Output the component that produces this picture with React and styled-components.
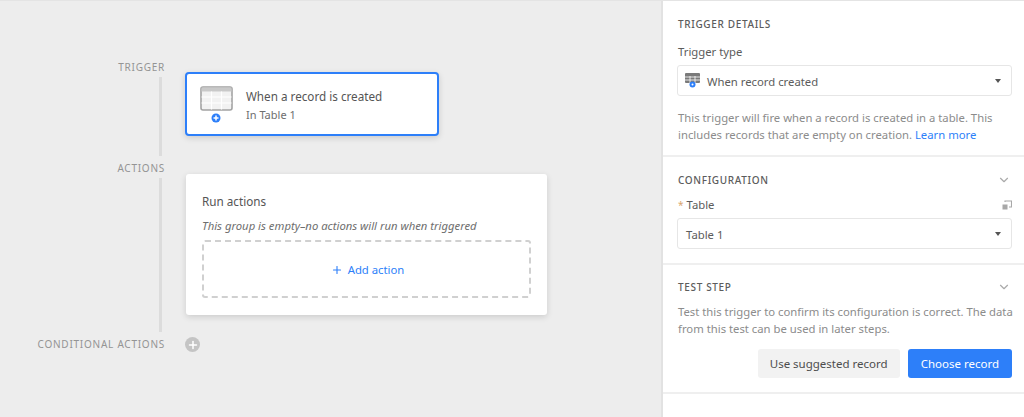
import styled, { createGlobalStyle } from "styled-components";
import { ChevronDown, Plus } from "lucide-react";

const Global = createGlobalStyle`
    html, body { margin: 0; padding: 0; height: 100%; }
    body { font-family: "Noto Sans", "Open Sans", sans-serif; background: #fff; overflow: hidden; }
    * { box-sizing: border-box; }
`

const Page = styled.div`
    width: 1024px;
    height: 417px;
    display: flex;
    border-top: 1px solid #e4e4e4;
`

const Canvas = styled.div`
    width: 663px;
    height: 100%;
    background-color: #ededed;
    padding-top: 60px;
    border-right: 2px solid #e2e2e2;
`

const Stage = styled.div`
    display: grid;
    grid-template-columns: 165px 1fr;
    column-gap: 20px;
    align-items: stretch;
    height: ${p => p.$h}px;
`

const Rail = styled.div`
    display: flex;
    flex-direction: column;
    align-items: flex-end;
`

const StageLabel = styled.div`
    font-size: 10px;
    line-height: 13px;
    letter-spacing: .75px;
    color: #949494;
    white-space: nowrap;
`

const Spine = styled.div`
    width: 3px;
    flex: 1;
    margin: 3px 3px 6px 0;
    background-color: #dcdcdc;
`

const TriggerCard = styled.div`
    margin-top: 11px;
    width: 254px;
    height: 64px;
    background: #fff;
    border: 2px solid #2d7ff9;
    border-radius: 4px;
    box-shadow: 0 2px 6px rgba(0,0,0,.14);
    display: flex;
    align-items: center;
    padding-left: 13px;
    gap: 12px;
`

const CardText = styled.div`
    display: flex;
    flex-direction: column;
    gap: 3px;
    margin-top: 2px;
`

const CardTitle = styled.div`
    font-size: 11.7px;
    line-height: 16px;
    color: #555;
`

const CardSub = styled.div`
    font-size: 11px;
    line-height: 16px;
    color: #6e6e6e;
`

const ActionsCard = styled.div`
    margin: 12px 0 0 1px;
    width: 361px;
    height: 141px;
    background: #fff;
    border-radius: 3px;
    box-shadow: 0 2px 6px rgba(0,0,0,.14);
    padding: 19px 16px 0;
`

const Hint = styled.div`
    margin-top: 9px;
    font-size: 11.3px;
    line-height: 15px;
    font-style: italic;
    color: #6e6e6e;
`

const AddAction = styled.div`
    margin-top: 7px;
    height: 58px;
    border: 2px dashed #d0d0d0;
    border-radius: 3px;
    display: flex;
    align-items: center;
    justify-content: center;
    gap: 5px;
    font-size: 11.3px;
    color: #2d7ff9;
    padding: 1px 0 0 2px;
`

const RoundAdd = styled.div`
    margin-top: -1px;
    width: 15px;
    height: 15px;
    border-radius: 50%;
    background: #c4c4c4;
    display: flex;
    align-items: center;
    justify-content: center;
`

const Panel = styled.div`
    width: 361px;
    height: 100%;
`

const Section = styled.section`
    height: ${p => p.$h}px;
    border-bottom: 2px solid #efefef;
    padding: ${p => p.$top}px 12px 0 15px;
`

const HeadRow = styled.div`
    display: flex;
    align-items: center;
    justify-content: space-between;
    height: 14px;
    svg { margin-right: 1px; }
`

const Heading = styled.h2`
    margin: 0;
    font-size: 10px;
    line-height: 14px;
    font-weight: 500;
    letter-spacing: .65px;
    color: #5c5c5c;
`

const FieldLabel = styled.div`
    font-size: 11.3px;
    line-height: 16px;
    color: #5c5c5c;
    display: flex;
    justify-content: space-between;
    align-items: center;
    margin-top: ${p => p.$top}px;
`

const Star = styled.span`
    color: #d9a66e;
    font-size: 10px;
    margin-right: 3px;
`

const Select = styled.div`
    height: 31px;
    margin: ${p => p.$top}px 0 0 -1px;
    border: 1px solid #e6e6e6;
    border-radius: 3px;
    display: flex;
    align-items: center;
    padding: 1px 9px 0 8px;
    font-size: 11.3px;
    color: #5c5c5c;
    gap: 7px;
`

const SelectText = styled.span`
    flex: 1;
`

const Caret = styled.span`
    width: 0;
    height: 0;
    border-left: 3.5px solid transparent;
    border-right: 3.5px solid transparent;
    border-top: 4.5px solid #555;
    margin: -1px 1px 0 0;
`

const Help = styled.p`
    margin: ${p => p.$top}px -4px 0 0;
    font-size: 11.3px;
    line-height: 16.5px;
    color: #8c8c8c;
`

const Link = styled.a`
    color: #2d7ff9;
`

const Buttons = styled.div`
    display: flex;
    justify-content: flex-end;
    gap: 8px;
    margin-top: 12px;
`

const Button = styled.button`
    height: 29px;
    border: 0;
    border-radius: 3px;
    font: inherit;
    font-size: 11.5px;
    padding: 0 ${p => p.$primary ? 13 : 12}px;
    color: ${p => p.$primary ? "#fff" : "#4d4d4d"};
    background-color: ${p => p.$primary ? "#2d7ff9" : "#f2f2f2"};
`

const SmallIconSvg = styled.svg`
    margin: -3px 0 0 -1px;
`

const TableIcon = () => (
    <svg width="34" height="37" viewBox="0 0 34 37">
        <rect x="1" y="1" width="31" height="23" rx="2" fill="#f2f2f2" stroke="#a3a3a3" strokeWidth="1.6" />
        <rect x="1.5" y="1.5" width="30" height="4" fill="#c9c9c9" />
        <path d="M1.5 11h30M1.5 17h30M11.5 5.5v18M21.5 5.5v18" stroke="#fff" strokeWidth="1.2" />
        <circle cx="16" cy="32" r="4.5" fill="#2d7ff9" />
        <path d="M13.5 32h5M16 29.5v5" stroke="#fff" strokeWidth="1.5" />
    </svg>
)

const SmallTableIcon = () => (
    <SmallIconSvg width="15" height="16" viewBox="0 0 15 16">
        <rect x="0" y="1" width="15" height="10" rx="1" fill="#7a7a7a" />
        <path d="M0 5h15M5 4v7M10 4v7M0 8h15" stroke="#fff" strokeWidth=".8" />
        <circle cx="7.5" cy="12.5" r="3" fill="#2d7ff9" />
        <circle cx="7.5" cy="12.5" r="1" fill="#fff" />
    </SmallIconSvg>
)

const SwapIcon = () => (
    <svg width="10" height="10" viewBox="0 0 10 10">
        <rect x="0.5" y="4.5" width="5" height="5" fill="#a8a8a8" />
        <path d="M3 2V1h6.5v6H7" fill="none" stroke="#a8a8a8" strokeWidth="1.1" />
    </svg>
)

const App = () => {
    return (
        <>
            <Global />
            <Page>
                <Canvas>
                    <Stage $h={101}>
                        <Rail>
                            <StageLabel>TRIGGER</StageLabel>
                            <Spine />
                        </Rail>
                        <TriggerCard>
                            <TableIcon />
                            <CardText>
                                <CardTitle>When a record is created</CardTitle>
                                <CardSub>In Table 1</CardSub>
                            </CardText>
                        </TriggerCard>
                    </Stage>
                    <Stage $h={176}>
                        <Rail>
                            <StageLabel>ACTIONS</StageLabel>
                            <Spine />
                        </Rail>
                        <ActionsCard>
                            <CardTitle>Run actions</CardTitle>
                            <Hint>This group is empty–no actions will run when triggered</Hint>
                            <AddAction>
                                <Plus size={12} strokeWidth={2.2} />
                                Add action
                            </AddAction>
                        </ActionsCard>
                    </Stage>
                    <Stage $h={20}>
                        <Rail>
                            <StageLabel>CONDITIONAL ACTIONS</StageLabel>
                        </Rail>
                        <RoundAdd>
                            <Plus size={12} color="#fff" strokeWidth={3} />
                        </RoundAdd>
                    </Stage>
                </Canvas>
                <Panel>
                    <Section $h={156} $top={16}>
                        <Heading>TRIGGER DETAILS</Heading>
                        <FieldLabel $top={13}>Trigger type</FieldLabel>
                        <Select $top={5}>
                            <SmallTableIcon />
                            <SelectText>When record created</SelectText>
                            <Caret />
                        </Select>
                        <Help $top={14}>
                            This trigger will fire when a record is created in a table. This includes records that are empty on creation. <Link>Learn more</Link>
                        </Help>
                    </Section>
                    <Section $h={108} $top={16}>
                        <HeadRow>
                            <Heading>CONFIGURATION</Heading>
                            <ChevronDown size={14} color="#aaa" />
                        </HeadRow>
                        <FieldLabel $top={10}>
                            <span><Star>*</Star>Table</span>
                            <SwapIcon />
                        </FieldLabel>
                        <Select $top={5}>
                            <SelectText>Table 1</SelectText>
                            <Caret />
                        </Select>
                    </Section>
                    <Section $h={129} $top={15}>
                        <HeadRow>
                            <Heading>TEST STEP</Heading>
                            <ChevronDown size={14} color="#aaa" />
                        </HeadRow>
                        <Help $top={10}>
                            Test this trigger to confirm its configuration is correct. The data from this test can be used in later steps.
                        </Help>
                        <Buttons>
                            <Button>Use suggested record</Button>
                            <Button $primary>Choose record</Button>
                        </Buttons>
                    </Section>
                </Panel>
            </Page>
        </>
    )
}

export default App;
